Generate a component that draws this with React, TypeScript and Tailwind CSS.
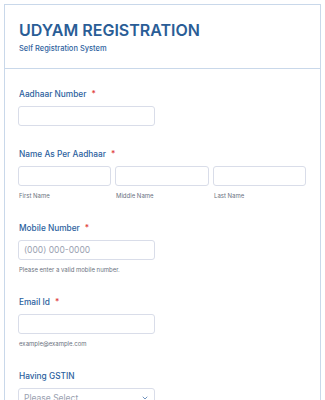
import { ChevronDown } from "lucide-react";

function Label({ text, required }: { text: string; required?: boolean }) {
  return (
    <div className="text-[8.3px] leading-[12px] font-medium text-[#2c5f9e] pl-px">
      {text}
      {required && <span className="text-[#e03a3a] ml-[5px]">*</span>}
    </div>
  );
}

function Input({ placeholder, className = "" }: { placeholder?: string; className?: string }) {
  return (
    <input
      type="text"
      placeholder={placeholder}
      className={`block h-5 rounded-[3px] border border-[#d9dde9] bg-white px-[5px] text-[8.5px] text-gray-700 placeholder:text-[#9aa1b0] outline-none ${className}`}
    />
  );
}

function Hint({ text }: { text: string }) {
  return <div className="text-[6px] leading-[8px] text-[#6b7280] pl-px mt-[5.5px]">{text}</div>;
}

export default function App() {
  return (
    <div className="min-h-screen bg-white pt-1 pl-1" style={{ fontFamily: "Inter, 'Noto Sans', sans-serif" }}>
      <div className="w-[317px] border border-[#c9d8ea] border-b-0 bg-white">
        {/* Header */}
        <div className="h-[64px] border-b border-[#c9d8ea] pl-[14px] pt-[14px]">
          <h1 className="text-[16px] leading-[22px] font-semibold text-[#2a5d96]">
            UDYAM REGISTRATION
          </h1>
          <p className="text-[7.5px] leading-[10px] font-medium text-[#2f63a0] mt-[3px]">Self Registration System</p>
        </div>

        {/* Fields */}
        <div className="pl-[13px] pt-[19px]">
          <div className="pb-[22px]">
            <Label text="Aadhaar Number" required />
            <Input className="mt-[6px] w-[137px]" />
          </div>

          <div className="pb-[22.5px]">
            <Label text="Name As Per Aadhaar" required />
            <div className="mt-[6px] flex gap-[4px]">
              <div className="w-[93px]">
                <Input className="w-full" />
                <Hint text="First Name" />
              </div>
              <div className="w-[94px]">
                <Input className="w-full" />
                <Hint text="Middle Name" />
              </div>
              <div className="w-[93px]">
                <Input className="w-full" />
                <Hint text="Last Name" />
              </div>
            </div>
          </div>

          <div className="pb-[22.5px]">
            <Label text="Mobile Number" required />
            <Input className="mt-[6px] w-[137px]" placeholder="(000) 000-0000" />
            <Hint text="Please enter a valid mobile number." />
          </div>

          <div className="pb-[22.5px]">
            <Label text="Email Id" required />
            <Input className="mt-[6px] w-[137px]" />
            <Hint text="example@example.com" />
          </div>

          <div className="pb-[22px]">
            <Label text="Having GSTIN" />
            <div className="mt-[6px] w-[137px] h-5 rounded-[3px] border border-[#d9dde9] flex items-center justify-between px-[5px]">
              <span className="text-[8.5px] text-[#9aa1b0]">Please Select</span>
              <ChevronDown className="w-[8px] h-[8px] text-[#2c5f9e]" strokeWidth={2} />
            </div>
          </div>
        </div>
      </div>
    </div>
  );
}
